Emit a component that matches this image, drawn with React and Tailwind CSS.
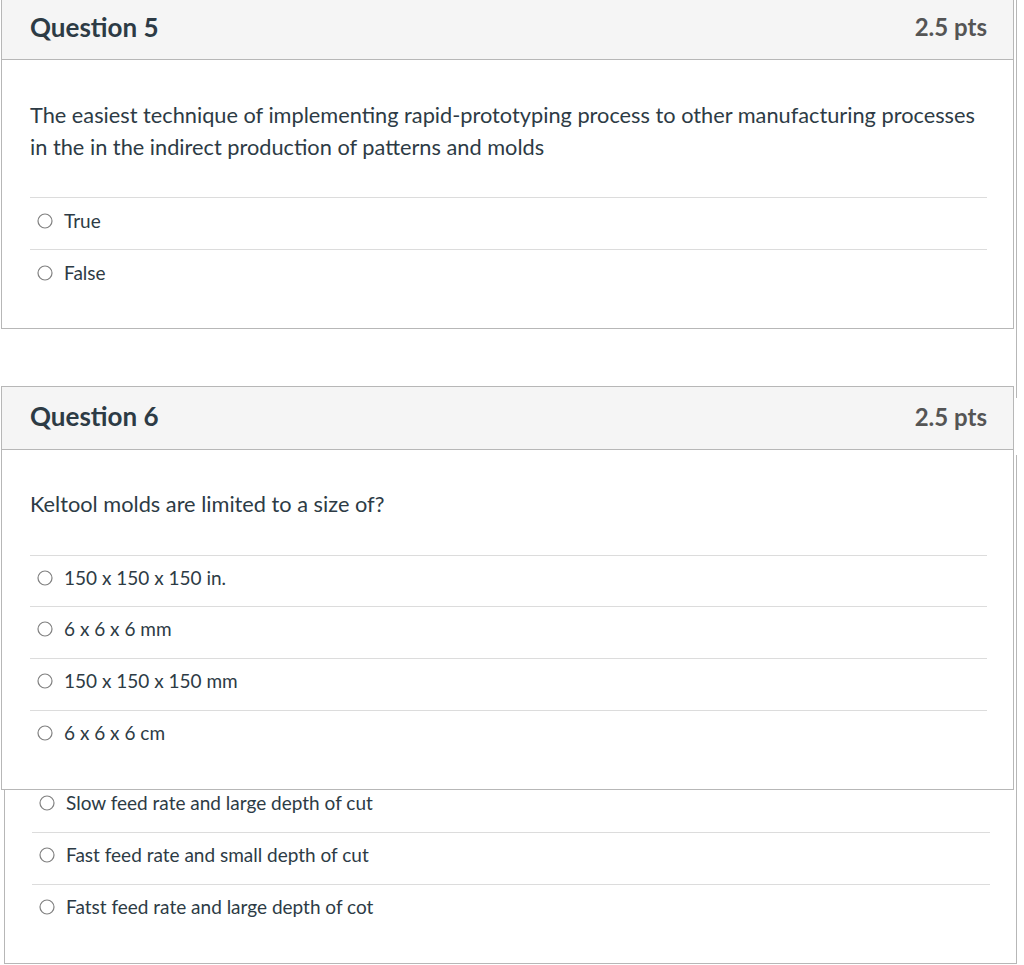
import React from "react";

const Radio = () => (
  <svg width="16" height="16" viewBox="0 0 16 16" className="shrink-0">
    <circle cx="8" cy="8" r="7" fill="white" stroke="#808080" strokeWidth="1.2" />
  </svg>
);

const Option = ({ label, h = "h-[52px]", pb = "pb-[7px]" }) => (
  <div className={`border-t border-[#dcdcdc] flex items-center ${h} ${pb} pl-[7px]`}>
    <Radio />
    <span className="ml-[11px] text-[19px] leading-6 text-[#2d3b45]">{label}</span>
  </div>
);

const Header = ({ title, h }) => (
  <div className={`flex items-center justify-between pl-[28px] pr-[26px] bg-[#f5f5f5] border-b border-[#b7b7b7] ${h}`}>
    <span className="text-[26px] font-bold text-[#2d3b45]">{title}</span>
    <span className="text-[24px] font-bold text-[#555]">2.5 pts</span>
  </div>
);

export default function App() {
  return (
    <div
      className="w-[1024px] h-[965px] bg-white flex overflow-hidden"
      style={{ fontFamily: "Lato, 'Open Sans', sans-serif" }}
    >
      <div className="w-[1016px] flex flex-col">
        {/* Question 5 */}
        <div className="ml-px w-[1013px] h-[329px] border-l border-r border-b border-[#b7b7b7] flex flex-col">
          <Header title="Question 5" h="h-[60px] pb-[5px]" />
          <div className="pt-[39px] pl-[28px] pr-[26px]">
            <p className="text-[21.75px] leading-8 text-[#2d3b45]">
              The easiest technique of implementing rapid-prototyping process to other manufacturing processes in the in the indirect production of patterns and molds
            </p>
            <div className="mt-[34px]">
              <Option label="True" pb="pb-[6px]" />
              <Option label="False" pb="pb-[6px]" />
            </div>
          </div>
        </div>

        <div className="h-[57px]" />

        {/* Question 6 */}
        <div className="ml-px w-[1013px] h-[404px] border border-[#b7b7b7] flex flex-col">
          <Header title="Question 6" h="h-[63px] pb-[3px]" />
          <div className="pt-[38px] pl-[28px] pr-[26px]">
            <p className="text-[21.75px] leading-8 text-[#2d3b45]">Keltool molds are limited to a size of?</p>
            <div className="mt-[35px]">
              <Option label="150 x 150 x 150 in." h="h-[51px]" pb="pb-[6px]" />
              <Option label="6 x 6 x 6 mm" />
              <Option label="150 x 150 x 150 mm" />
              <Option label="6 x 6 x 6 cm" />
            </div>
          </div>
        </div>

        {/* Fragment of another question */}
        <div className="ml-[4px] w-[1012px] h-[174px] border-l border-b border-[#b7b7b7] pl-[27px] pr-[26px] flex flex-col">
          <div className="flex items-center h-[42px] pb-[16px] pl-[7px]">
            <Radio />
            <span className="ml-[11px] text-[19px] leading-6 text-[#2d3b45]">Slow feed rate and large depth of cut</span>
          </div>
          <Option label="Fast feed rate and small depth of cut" />
          <Option label="Fatst feed rate and large depth of cot" />
        </div>
      </div>

      {/* right edge of the card behind */}
      <div className="w-px flex flex-col">
        <div className="h-[398px] bg-[#b7b7b7]" />
        <div className="h-[57px]" />
        <div className="h-[509px] bg-[#b7b7b7]" />
      </div>
    </div>
  );
}
